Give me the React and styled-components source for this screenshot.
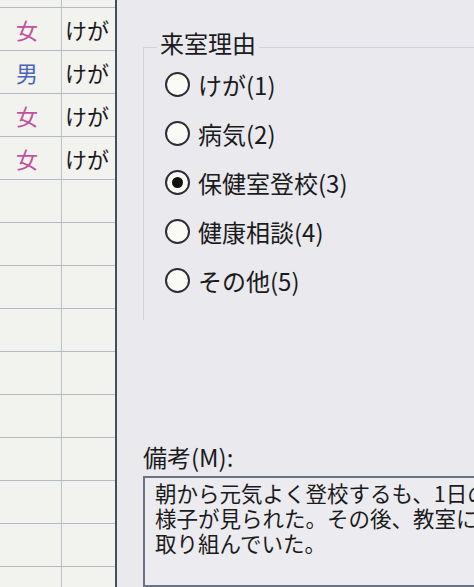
import React from "react";
import styled, { createGlobalStyle } from "styled-components";

const GlobalStyle = createGlobalStyle`
  html, body {
    margin: 0;
    padding: 0;
    background: #e9e9ee;
  }
  * {
    box-sizing: border-box;
  }
`;

const FONT = `"Noto Sans CJK JP", "Noto Sans", sans-serif`;

const Screen = styled.div`
  display: flex;
  width: 474px;
  height: 587px;
  overflow: hidden;
  font-family: ${FONT};
  color: #1b1b1d;
`;

const Sheet = styled.div`
  flex: none;
  width: 115px;
  height: 100%;
  overflow: hidden;
  background: #f2f2ef;
`;

const SheetGrid = styled.div`
  display: grid;
  grid-template-columns: 62px 53px;
  grid-auto-rows: 43px;
  margin-top: -35px;
`;

const Cell = styled.div`
  display: flex;
  align-items: center;
  padding-left: ${(p) => (p.$first ? "16px" : "3px")};
  border-bottom: 1px solid #b5b9c0;
  border-right: ${(p) => (p.$first ? "1px solid #bcc0c6" : "none")};
  font-size: 22px;
  line-height: 1;
  color: ${(p) => p.$color || "#1b1b1d"};
  white-space: nowrap;
  overflow: hidden;
`;

const Divider = styled.div`
  flex: none;
  width: 2px;
  background: #474d59;
`;

const Panel = styled.div`
  flex: 1;
  display: flex;
  flex-direction: column;
  overflow: hidden;
  background: #e9e9ee;
`;

const Group = styled.div`
  margin: 47px -40px 0 26px;
  border-top: 1px solid #d1d2d9;
  border-left: 1px solid #d1d2d9;
  padding-bottom: 15px;
`;

const GroupTitle = styled.div`
  width: fit-content;
  margin: -19px 0 0 13px;
  padding: 0 3px;
  background: #e9e9ee;
  font-size: 24px;
  line-height: 28px;
`;

const RadioList = styled.div`
  display: flex;
  flex-direction: column;
  margin-top: 3px;
  padding-left: 21px;
`;

const RadioRow = styled.label`
  display: flex;
  align-items: center;
  gap: 8px;
  height: 49px;
  font-size: 24px;
  line-height: 1;
`;

const RadioCircle = styled.span`
  flex: none;
  display: flex;
  align-items: center;
  justify-content: center;
  width: 25px;
  height: 25px;
  border-radius: 50%;
  border: 2px solid #2b2e35;
  background: #fbfbf5;

  &::after {
    content: "";
    display: ${(p) => (p.$checked ? "block" : "none")};
    width: 11px;
    height: 11px;
    border-radius: 50%;
    background: #111;
  }
`;

const FieldLabel = styled.div`
  margin: 123px 0 0 26px;
  font-size: 24px;
  line-height: 28px;
`;

const MemoBox = styled.div`
  margin: 5px -60px 0 26px;
  height: 140px;
  border: 2px solid #6b7284;
  background: #ececf0;
  padding: 2px 0 0 10px;
  font-size: 21.5px;
  line-height: 25px;
  white-space: pre;
  overflow: hidden;
`;

const rows = [
  { sex: "女", color: "#c2509e", reason: "けが" },
  { sex: "男", color: "#4a66b6", reason: "けが" },
  { sex: "女", color: "#c2509e", reason: "けが" },
  { sex: "女", color: "#c2509e", reason: "けが" },
];

const reasons = [
  { label: "けが(1)", checked: false },
  { label: "病気(2)", checked: false },
  { label: "保健室登校(3)", checked: true },
  { label: "健康相談(4)", checked: false },
  { label: "その他(5)", checked: false },
];

const memo = [
  "朝から元気よく登校するも、1日の中で",
  "様子が見られた。その後、教室に戻り",
  "取り組んでいた。",
];

export default function App() {
  const blanks = Array.from({ length: 11 });
  return (
    <>
      <GlobalStyle />
      <Screen>
        <Sheet>
          <SheetGrid>
            <Cell $first />
            <Cell />
            {rows.map((r, i) => (
              <React.Fragment key={i}>
                <Cell $first $color={r.color}>{r.sex}</Cell>
                <Cell>{r.reason}</Cell>
              </React.Fragment>
            ))}
            {blanks.map((_, i) => (
              <React.Fragment key={"b" + i}>
                <Cell $first />
                <Cell />
              </React.Fragment>
            ))}
          </SheetGrid>
        </Sheet>
        <Divider />
        <Panel>
          <Group>
            <GroupTitle>来室理由</GroupTitle>
            <RadioList>
              {reasons.map((r) => (
                <RadioRow key={r.label}>
                  <RadioCircle $checked={r.checked} />
                  {r.label}
                </RadioRow>
              ))}
            </RadioList>
          </Group>
          <FieldLabel>備考(M):</FieldLabel>
          <MemoBox>{memo.join("\n")}</MemoBox>
        </Panel>
      </Screen>
    </>
  );
}
